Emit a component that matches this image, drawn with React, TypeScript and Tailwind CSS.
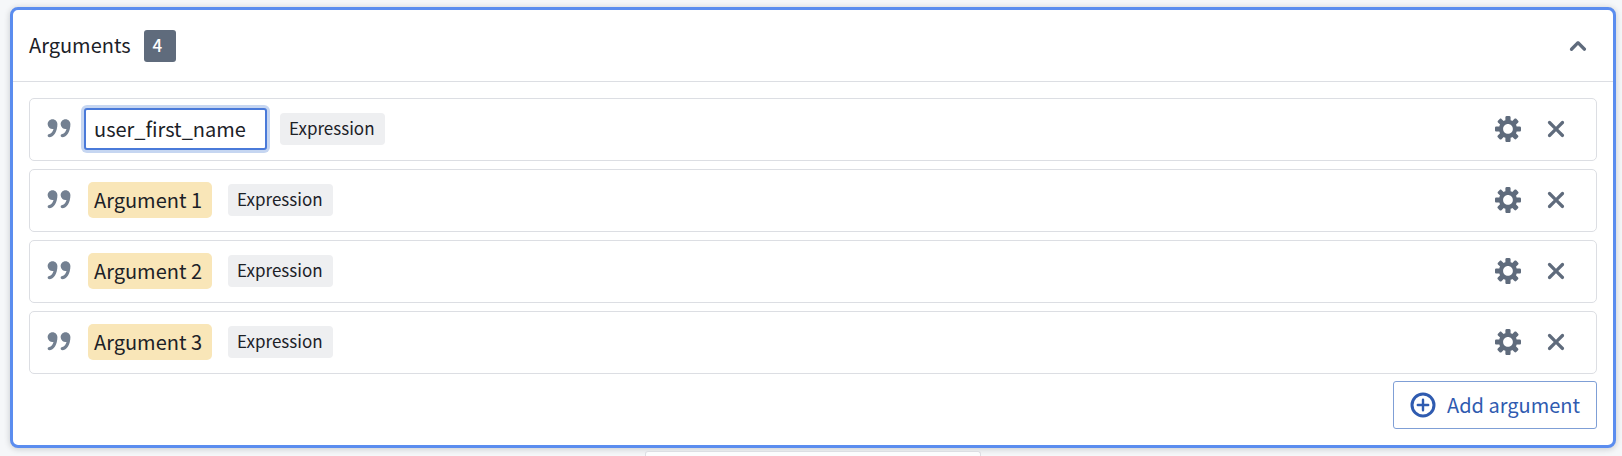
import { useState } from "react";

type Argument = { id: number; name: string };

const initialArguments: Argument[] = [
  { id: 0, name: "user_first_name" },
  { id: 1, name: "Argument 1" },
  { id: 2, name: "Argument 2" },
  { id: 3, name: "Argument 3" },
];

const icons = {
  quote:
    "M15.02 5c0-1.66-1.34-3-3-3s-3 1.34-3 3a2.996 2.996 0 003.6 2.94C12.1 9.76 11.14 11 10.02 11c-.55 0-1 .45-1 1s.45 1 1 1c2.76 0 5-3.58 5-8zm-11-3c-1.66 0-3 1.34-3 3a2.996 2.996 0 003.6 2.94C4.1 9.76 3.14 11 2.02 11c-.55 0-1 .45-1 1s.45 1 1 1c2.76 0 5-3.58 5-8 0-1.66-1.34-3-3-3z",
  cog: "M15.19 6.39h-1.85c-.11-.37-.27-.71-.45-1.04l1.36-1.36c.31-.31.31-.82 0-1.13l-1.13-1.13c-.31-.31-.82-.31-1.13 0l-1.36 1.36c-.33-.17-.67-.33-1.04-.44V.79c0-.44-.36-.8-.8-.8h-1.6c-.44 0-.8.36-.8.8v1.86c-.39.12-.75.28-1.1.47l-1.3-1.3c-.3-.3-.79-.3-1.09 0L1.82 2.91c-.3.3-.3.79 0 1.09l1.3 1.3c-.2.34-.36.7-.48 1.09H.79c-.44 0-.8.36-.8.8v1.6c0 .44.36.8.8.8h1.85c.11.37.27.71.45 1.04l-1.36 1.36c-.31.31-.31.82 0 1.13l1.13 1.13c.31.31.82.31 1.13 0l1.36-1.36c.33.18.67.33 1.04.44v1.86c0 .44.36.8.8.8h1.6c.44 0 .8-.36.8-.8v-1.86c.39-.12.75-.28 1.1-.47l1.3 1.3c.3.3.79.3 1.09 0l1.09-1.09c.3-.3.3-.79 0-1.09l-1.3-1.3c.19-.35.36-.71.48-1.1h1.85c.44 0 .8-.36.8-.8v-1.6a.816.816 0 00-.81-.79zm-7.2 4.6c-1.66 0-3-1.34-3-3s1.34-3 3-3 3 1.34 3 3-1.34 3-3 3z",
  cross:
    "M9.41 8l3.29-3.29c.19-.18.3-.43.3-.71a1.003 1.003 0 00-1.71-.71L8 6.59l-3.29-3.3a1.003 1.003 0 00-1.42 1.42L6.59 8 3.3 11.29c-.19.18-.3.43-.3.71a1.003 1.003 0 001.71.71L8 9.41l3.29 3.29c.18.19.43.3.71.3a1.003 1.003 0 00.71-1.71L9.41 8z",
  chevronUp:
    "M12.71 9.29l-4-4C8.53 5.11 8.28 5 8 5s-.53.11-.71.29l-4 4a1.003 1.003 0 001.42 1.42L8 7.41l3.29 3.29c.18.19.43.3.71.3a1.003 1.003 0 00.71-1.71z",
};

function Icon({ name, className }: { name: keyof typeof icons; className: string }) {
  return (
    <svg viewBox="0 0 16 16" fill="currentColor" aria-hidden="true" className={className}>
      <path d={icons[name]} />
    </svg>
  );
}

function AddIcon() {
  return (
    <svg viewBox="0 0 26 26" fill="none" stroke="currentColor" aria-hidden="true" className="size-[26px] shrink-0">
      <circle cx="13" cy="13" r="11" strokeWidth="3" />
      <path d="M13 7.8v10.4M7.8 13h10.4" strokeWidth="2.4" strokeLinecap="round" />
    </svg>
  );
}

function ExpressionTag() {
  return (
    <span className="flex h-8 items-center rounded-[4px] bg-[#eeeff1] pr-[10px] pb-[2px] pl-[9px] text-[17px] leading-6">
      Expression
    </span>
  );
}

export default function App() {
  const [args, setArgs] = useState(initialArguments);
  const [open, setOpen] = useState(true);

  const rename = (id: number, name: string) =>
    setArgs(args.map((a) => (a.id === id ? { ...a, name } : a)));
  const add = () => {
    const id = Math.max(0, ...args.map((a) => a.id)) + 1;
    setArgs([...args, { id, name: `Argument ${id}` }]);
  };

  return (
    <main className="min-h-screen bg-[#f5f7f9] pt-[7px] pr-[6px] pl-[10px] font-['Noto_Sans_CJK_SC','Noto_Sans',sans-serif] text-[#1c2127]">
      <section className="rounded-[8px] border-3 border-[#5b8def] bg-white shadow-[0_1px_6px_rgba(17,20,24,0.2)]">
        <header className="flex h-[72px] items-center border-b border-[#dcdee3] pr-[22px] pl-4">
          <h2 className="pb-[2px] text-[20px] leading-8">Arguments</h2>
          <span className="ml-[13px] flex size-8 items-center rounded-[3px] bg-[#5f6b7c] pb-[2px] pl-[9px] text-[17px] leading-6 font-medium text-white">
            {args.length}
          </span>
          <button
            type="button"
            aria-label="Toggle arguments"
            aria-expanded={open}
            onClick={() => setOpen(!open)}
            className="ml-auto text-[#5f6b7c]"
          >
            <Icon name="chevronUp" className="size-[26px]" />
          </button>
        </header>

        {open && (
          <div className="px-4 py-4">
            <ul className="flex flex-col gap-2">
              {args.map((arg) => (
                <li
                  key={arg.id}
                  className="flex h-[63px] items-center rounded-[5px] border border-[#dcdee3] pr-[27px] pb-px pl-4"
                >
                  <Icon name="quote" className="size-[26px] text-[#738091]" />
                  {arg.id === 0 ? (
                    <>
                      <input
                        aria-label="Argument name"
                        value={arg.name}
                        onChange={(e) => rename(arg.id, e.target.value)}
                        className="mr-[13px] ml-3 h-[42px] w-[183px] rounded-[3px] border-2 border-[#4a7ad9] bg-white px-2 pb-[2px] text-[20px] leading-8 ring-3 ring-[#c6d6f1] outline-none"
                      />
                      <ExpressionTag />
                    </>
                  ) : (
                    <>
                      <span className="mr-4 ml-4 flex h-9 items-center rounded-[5px] bg-[#f9e6b8] pr-[10px] pl-[6px] text-[20px] leading-8">
                        {arg.name}
                      </span>
                      <ExpressionTag />
                    </>
                  )}
                  <div className="ml-auto flex items-center gap-[22px] text-[#5f6b7c]">
                    <button type="button" aria-label={`Settings for ${arg.name}`}>
                      <Icon name="cog" className="size-[26px]" />
                    </button>
                    <button
                      type="button"
                      aria-label={`Remove ${arg.name}`}
                      onClick={() => setArgs(args.filter((a) => a.id !== arg.id))}
                    >
                      <Icon name="cross" className="size-[26px]" />
                    </button>
                  </div>
                </li>
              ))}
            </ul>
            <div className="mt-[7px] flex justify-end">
              <button
                type="button"
                onClick={add}
                className="flex h-12 items-center gap-[11px] rounded-[3px] border border-[#7f9fd6] px-4 text-[20px] leading-8 text-[#2f5bb0]"
              >
                <AddIcon />
                Add argument
              </button>
            </div>
          </div>
        )}
      </section>
      <div className="mx-auto mt-[3px] h-[5px] w-[336px] rounded-t-[3px] border border-b-0 border-[#dcdee3] bg-[#fbfcfd]" />
    </main>
  );
}
